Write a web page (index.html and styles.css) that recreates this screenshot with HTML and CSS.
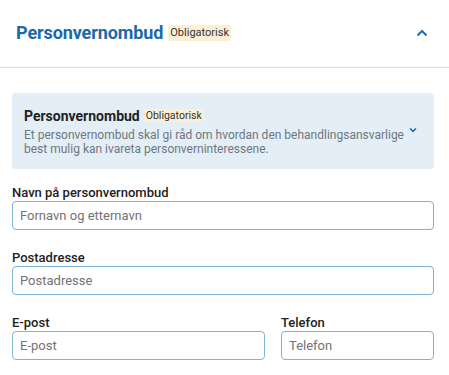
FILE: index.html
```html
<!DOCTYPE html>
<html lang="no">
<head>
<meta charset="utf-8">
<link rel="stylesheet" href="styles.css">
</head>
<body>
<div class="panel">
  <div class="head">
    <div class="head-title">
      <h2>Personvernombud</h2>
      <span class="badge">Obligatorisk</span>
    </div>
    <svg class="chev-up" width="12" height="8" viewBox="0 0 12 8"><path d="M1.5 6.5 L6 2 L10.5 6.5" fill="none" stroke="#1a6fae" stroke-width="2"/></svg>
  </div>
  <div class="body">
    <div class="info">
      <div class="info-text">
        <div class="info-title"><span class="info-name">Personvernombud</span><span class="badge small">Obligatorisk</span></div>
        <p class="info-desc">Et personvernombud skal gi råd om hvordan den behandlingsansvarlige best mulig kan ivareta personverninteressene.</p>
      </div>
      <svg class="chev-down" width="8" height="6" viewBox="0 0 8 6"><path d="M1 1.5 L4 4.3 L7 1.5" fill="none" stroke="#1a6fae" stroke-width="1.6"/></svg>
    </div>
    <div class="field first">
      <label>Navn på personvernombud</label>
      <input type="text" placeholder="Fornavn og etternavn">
    </div>
    <div class="field">
      <label>Postadresse</label>
      <input type="text" placeholder="Postadresse">
    </div>
    <div class="row">
      <div class="field wide">
        <label>E-post</label>
        <input type="text" placeholder="E-post">
      </div>
      <div class="field narrow">
        <label>Telefon</label>
        <input type="text" placeholder="Telefon">
      </div>
    </div>
  </div>
</div>
</body>
</html>
```
FILE: styles.css
```css
* { box-sizing: border-box; }
body {
  margin: 0;
  background: #fff;
  font-family: Roboto, "Liberation Sans", sans-serif;
  color: #222;
}
.panel { width: 449px; }
.head {
  height: 68px;
  display: flex;
  align-items: center;
  justify-content: space-between;
  padding: 0 21px 2px 16px;
  border-bottom: 1px solid #dcdcdc;
}
.head-title { display: flex; align-items: center; gap: 5px; }
.head h2 {
  margin: 0;
  font-size: 18px;
  font-weight: 700;
  color: #1a6aa9;
  letter-spacing: -0.1px;
}
.badge {
  background: #fdefd6;
  color: #333;
  font-size: 11px;
  padding: 2px 2px;
  border-radius: 2px;
  line-height: 12px;
}
.chev-up { display: block; }
.body { padding: 25px 15px 0 12px; }
.info {
  background: #e3eef6;
  border-radius: 4px;
  display: flex;
  align-items: center;
  padding: 15px 17px 13px 12px;
  gap: 5px;
}
.info-text { flex: 1; min-width: 0; }
.info-title { display: flex; align-items: flex-start; gap: 4px; }
.info-name { font-size: 14px; font-weight: 700; color: #222; line-height: 17px; }
.badge.small { font-size: 10.5px; line-height: 11px; padding: 1px 2px; margin-top: 1px; }
.info-desc {
  margin: 3px 0 0;
  font-size: 12px;
  line-height: 14px;
  color: #6f7880;
}
.chev-down { display: block; margin-bottom: 4px; flex: none; }
.field { display: flex; flex-direction: column; margin-top: 20px; min-width: 0; }
.field.first { margin-top: 16px; }
.field label {
  font-size: 13px;
  font-weight: 500;
  color: #222;
  line-height: 15px;
  margin-bottom: 1px;
}
.field input {
  width: 100%;
  min-width: 0;
  height: 29px;
  border: 1px solid #7eb2d7;
  border-radius: 4px;
  padding: 0 7px;
  font-family: inherit;
  font-size: 13px;
  color: #222;
  outline: none;
}
.field input::placeholder { color: #737373; }
.row { display: flex; gap: 16px; }
.field.wide { flex: 0 0 253px; }
.field.narrow { flex: 1 1 0; }
```
